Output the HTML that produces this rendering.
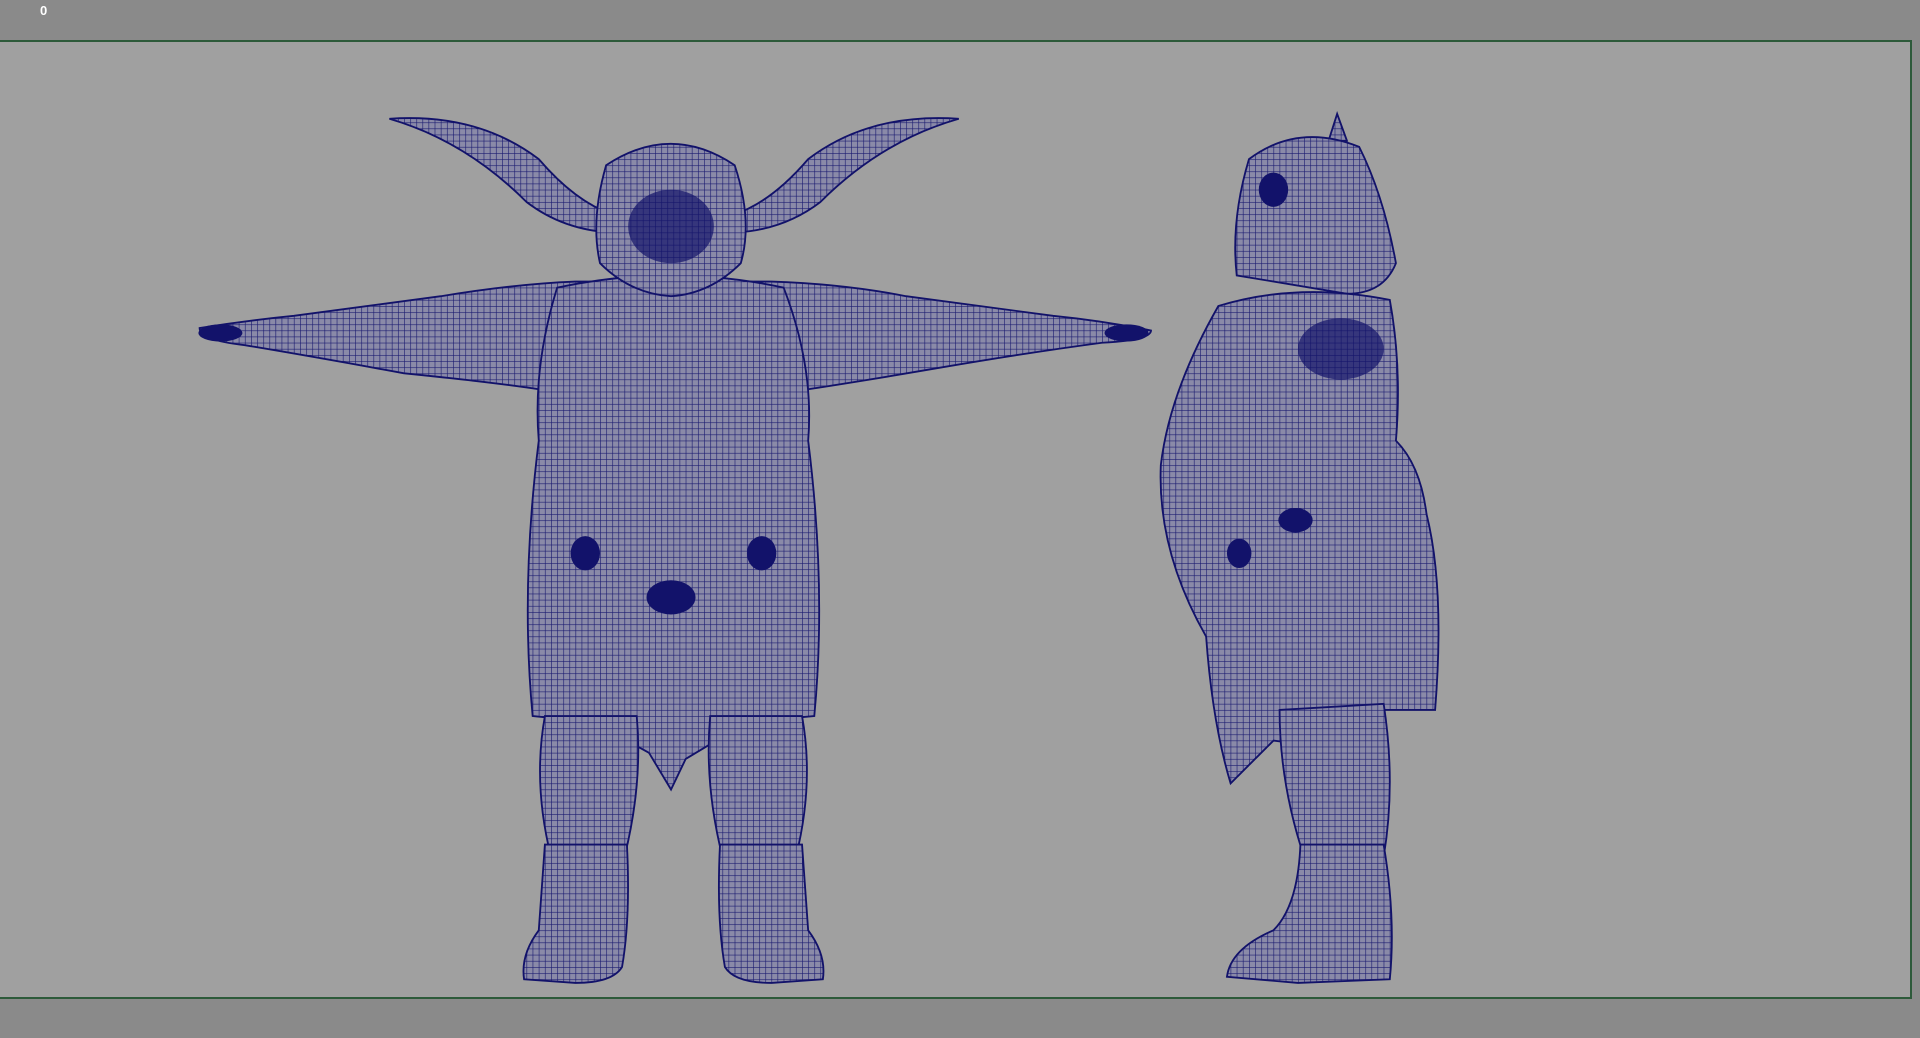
<!DOCTYPE html>
<html><head><meta charset="utf-8"><style>
html,body{margin:0;padding:0;width:1920px;height:1038px;overflow:hidden;background:#8a8a8a;font-family:"Liberation Sans",sans-serif}
.lbl{position:absolute;left:40px;top:3px;color:#fff;font-size:13px;font-weight:bold}
.frame{position:absolute;left:-2px;top:40px;width:1910px;height:955px;background:#a0a0a0;border:2px solid #2d5a3a;box-sizing:content-box}
svg{position:absolute;left:0;top:0}
</style></head><body>
<div class="lbl">0</div>
<div class="frame"></div>
<svg width="1920" height="1038" viewBox="0 0 1568 848" preserveAspectRatio="none">
<defs>
<pattern id="m" width="5" height="5" patternUnits="userSpaceOnUse">
<rect width="5" height="5" fill="#8a8aa8"/>
<path d="M0 0H5M0 0V5" stroke="#1a1a70" stroke-width="1"/>
</pattern>
</defs>
<g fill="url(#m)" stroke="#12126a" stroke-width="1.5">
<path d="M318 97 Q390 92 440 130 Q470 165 500 175 L500 190 Q460 188 430 165 Q380 115 318 97Z"/>
<path d="M783 97 Q710 92 660 130 Q630 165 600 175 L600 190 Q640 188 670 165 Q720 115 783 97Z"/>
<path d="M163 268 Q200 262 240 258 Q300 250 360 242 Q420 232 470 230 L630 230 Q690 232 740 242 Q800 250 860 258 Q900 262 940 270 Q940 278 900 280 Q840 288 770 300 Q700 312 660 318 L440 318 Q400 312 330 305 Q260 292 200 282 Q163 278 163 268Z"/>
<path d="M455 235 Q548 215 640 235 Q665 300 660 360 Q675 480 665 585 L610 590 L560 620 L548 645 L530 615 L485 590 L435 585 Q425 480 440 360 Q435 300 455 235Z"/>
<path d="M445 585 L520 585 Q525 640 510 700 L450 700 Q435 640 445 585Z"/>
<path d="M580 585 L655 585 Q665 640 650 700 L590 700 Q575 640 580 585Z"/>
<path d="M445 690 L512 690 Q515 750 508 790 Q500 803 470 803 L428 800 Q425 780 440 760Z"/>
<path d="M588 690 L655 690 L660 760 Q675 780 672 800 L630 803 Q600 803 592 790 Q585 750 588 690Z"/>
<path d="M495 135 Q548 100 600 135 Q615 180 605 215 Q580 240 548 242 Q515 240 490 215 Q482 180 495 135Z"/>
<path d="M1085 115 L1092 93 L1100 115Z"/>
<path d="M1020 130 Q1060 100 1110 120 Q1130 160 1140 215 Q1130 240 1100 240 L1010 225 Q1005 180 1020 130Z"/>
<path d="M995 250 Q1060 230 1135 245 Q1145 300 1140 360 Q1160 380 1165 420 Q1180 480 1172 580 L1120 580 L1080 610 L1040 605 L1005 640 Q990 590 985 520 Q945 450 948 380 Q955 320 995 250Z"/>
<path d="M1045 580 L1130 575 Q1140 640 1130 700 L1065 700 Q1045 640 1045 580Z"/>
<path d="M1062 690 L1130 690 Q1140 750 1135 800 L1060 803 L1002 798 Q1005 775 1040 760 Q1060 740 1062 690Z"/>
</g>
<g fill="#12126a">
<ellipse cx="548" cy="185" rx="35" ry="30" opacity=".7"/>
<ellipse cx="548" cy="488" rx="20" ry="14"/>
<ellipse cx="478" cy="452" rx="12" ry="14"/>
<ellipse cx="622" cy="452" rx="12" ry="14"/>
<ellipse cx="1058" cy="425" rx="14" ry="10"/>
<ellipse cx="1012" cy="452" rx="10" ry="12"/>
<ellipse cx="1095" cy="285" rx="35" ry="25" opacity=".7"/>
<ellipse cx="1040" cy="155" rx="12" ry="14"/>
<ellipse cx="180" cy="272" rx="18" ry="7"/>
<ellipse cx="920" cy="272" rx="18" ry="7"/>
</g>
</svg>
</body></html>
